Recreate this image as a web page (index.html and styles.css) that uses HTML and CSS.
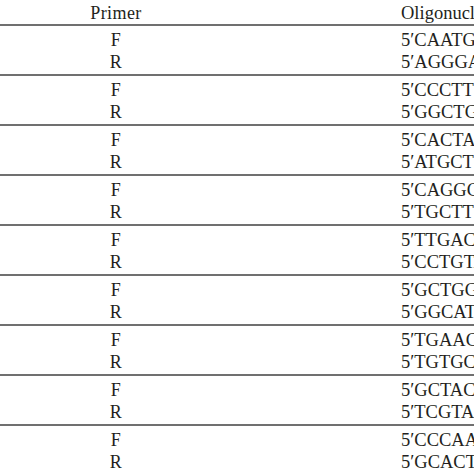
FILE: index.html
```html
<!DOCTYPE html>
<html>
<head>
<meta charset="utf-8">
<link rel="stylesheet" href="styles.css">
</head>
<body>
<div class="table">
  <div class="group head">
    <div class="row"><div class="c1">Primer</div><div class="c2">Oligonucleotide sequence</div></div>
  </div>
  <div class="group">
    <div class="row"><div class="c1">F</div><div class="c2">5′CAATGCTGACCTCAAG3′</div></div>
    <div class="row"><div class="c1">R</div><div class="c2">5′AGGGAGTCAGCATTGC3′</div></div>
  </div>
  <div class="group">
    <div class="row"><div class="c1">F</div><div class="c2">5′CCCTTCTGGACTGAGC3′</div></div>
    <div class="row"><div class="c1">R</div><div class="c2">5′GGCTGCTTCAGAATGC3′</div></div>
  </div>
  <div class="group">
    <div class="row"><div class="c1">F</div><div class="c2">5′CACTAGCAGCCATGAG3′</div></div>
    <div class="row"><div class="c1">R</div><div class="c2">5′ATGCTCCTGAGCGTAG3′</div></div>
  </div>
  <div class="group">
    <div class="row"><div class="c1">F</div><div class="c2">5′CAGGGAGTCGATGCAC3′</div></div>
    <div class="row"><div class="c1">R</div><div class="c2">5′TGCTTCAGCTCAGTGC3′</div></div>
  </div>
  <div class="group">
    <div class="row"><div class="c1">F</div><div class="c2">5′TTGACCTCAGCGCTGA3′</div></div>
    <div class="row"><div class="c1">R</div><div class="c2">5′CCTGTAGCCCACGATG3′</div></div>
  </div>
  <div class="group">
    <div class="row"><div class="c1">F</div><div class="c2">5′GCTGGAGGTGCTAGAC3′</div></div>
    <div class="row"><div class="c1">R</div><div class="c2">5′GGCATCGACAGTCCAT3′</div></div>
  </div>
  <div class="group">
    <div class="row"><div class="c1">F</div><div class="c2">5′TGAACGGGAAGCTCAC3′</div></div>
    <div class="row"><div class="c1">R</div><div class="c2">5′TGTGCCGTTGAACTTG3′</div></div>
  </div>
  <div class="group">
    <div class="row"><div class="c1">F</div><div class="c2">5′GCTACTCTGCCACCAA3′</div></div>
    <div class="row"><div class="c1">R</div><div class="c2">5′TCGTACCGCTGTTCAG3′</div></div>
  </div>
  <div class="group">
    <div class="row"><div class="c1">F</div><div class="c2">5′CCCAAGCTCACCTGAC3′</div></div>
    <div class="row"><div class="c1">R</div><div class="c2">5′GCACTGAGCTTGGCAT3′</div></div>
  </div>
</div>
</body>
</html>
```

FILE: styles.css
```css
html, body {
  margin: 0;
  padding: 0;
  background: #ffffff;
  overflow: hidden;
}
.table {
  width: 474px;
  overflow: hidden;
  font-family: "Liberation Serif", "Times New Roman", serif;
  font-size: 18px;
  color: #231f20;
}
.group {
  padding: 3px 0 1px;
  border-bottom: 2px solid #707070;
}
.group.head {
  padding: 2px 0 0;
}
.row {
  display: grid;
  grid-template-columns: 232px 242px;
  height: 22px;
  line-height: 22px;
}
.c1 {
  text-align: center;
  letter-spacing: 0.4px;
}
.c2 {
  padding-left: 169px;
  white-space: nowrap;
  overflow: hidden;
  font-size: 18.5px;
  letter-spacing: 0;
}
```
